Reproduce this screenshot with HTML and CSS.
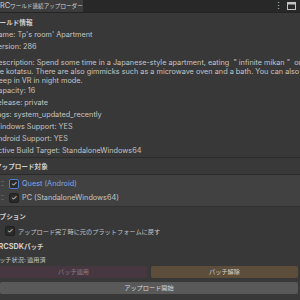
FILE: index.html
```html
<!DOCTYPE html>
<html lang="ja">
<head>
  <meta charset="UTF-8">
  <title>VRCワールド連続アップローダー</title>
  <link rel="stylesheet" href="styles.css">
</head>
<body>
  <div class="tabbar">
    <div class="tab">VRC<span class="ja">ワールド連続アップローダー</span></div>
    <div class="tab-icons">
      <span class="kebab">⋮</span>
      <svg class="win-icon" width="9" height="8" viewBox="0 0 9 8">
        <rect x="0.5" y="0.5" width="8" height="7" fill="none" stroke="#c4c4c4"/>
        <rect x="0.5" y="0.5" width="8" height="2" fill="#c4c4c4"/>
      </svg>
    </div>
  </div>

  <div class="panel">
    <div class="title first"><span class="ja">ワールド情報</span></div>
    <div class="field">Name: Tp's room' Apartment</div>
    <div class="field">Version: 286</div>
    <div class="desc">Description: Spend some time in a Japanese-style apartment, eating &nbsp;" infinite mikan " &nbsp;on<br>the kotatsu. There are also gimmicks such as a microwave oven and a bath. You can also<br>sleep in VR in night mode.</div>
    <div class="field">Capacity: 16</div>
    <div class="field">Release: private</div>
    <div class="field">Tags: system_updated_recently</div>
    <div class="field">Windows Support: YES</div>
    <div class="field">Android Support: YES</div>
    <div class="field">Active Build Target: StandaloneWindows64</div>
  </div>

  <div class="list-box">
    <div class="list-header"><span class="ja">アップロード対象</span></div>
    <div class="list-body">
      <div class="list-row selected">
        <span class="handle"></span>
        <span class="check focus">✓</span>
        <span>Quest (Android)</span>
      </div>
      <div class="list-row">
        <span class="handle"></span>
        <span class="check">✓</span>
        <span>PC (StandaloneWindows64)</span>
      </div>
    </div>
  </div>

  <div class="panel">
    <div class="title options"><span class="ja">オプション</span></div>
    <div class="option-row">
      <span class="check">✓</span>
      <span class="ja">アップロード完了時に元のプラットフォームに戻す</span>
    </div>
    <div class="title sdk">VRCSDK<span class="ja">パッチ</span></div>
    <div class="field status"><span class="ja">パッチ状況: 適用済</span></div>
  </div>

  <div class="buttons">
    <div class="btn btn-apply"><span class="ja">パッチ適用</span></div>
    <div class="btn btn-remove"><span class="ja">パッチ解除</span></div>
  </div>
  <div class="btn btn-upload"><span class="ja">アップロード開始</span></div>
</body>
</html>
```

FILE: styles.css
```css
body {
  margin: 0;
  width: 300px;
  height: 300px;
  overflow: hidden;
  background-color: #383838;
  color: #c4c4c4;
  font-family: Inter, "Noto Sans CJK JP", sans-serif;
  font-size: 7.3px;
}

.ja {
  font-family: "Noto Sans CJK JP", sans-serif;
  font-size: 6.2px;
}

.tabbar {
  display: flex;
  height: 12px;
  background-color: #282828;
  border-bottom: 1px solid #232323;
}

.tab {
  width: 88px;
  margin-left: -5px;
  background-color: #3c3c3c;
  line-height: 12px;
  white-space: nowrap;
  overflow: hidden;
  color: #d0d0d0;
}

.tab .ja {
  font-size: 5.6px;
}

.tab-icons {
  margin-left: auto;
  display: flex;
  align-items: center;
  gap: 4px;
  padding-right: 4px;
}

.kebab {
  font-size: 9px;
  line-height: 12px;
}

.panel {
  margin-left: -7px;
  white-space: nowrap;
}

.title {
  height: 14px;
  line-height: 14px;
  font-weight: bold;
  color: #cfcfcf;
}

.title .ja {
  font-size: 6.6px;
}

.title.first {
  margin-top: 2px;
}

.field {
  height: 12px;
  line-height: 12px;
}

.desc {
  padding: 5px 0 0;
  line-height: 9px;
}

.list-box {
  border-top: 1px solid #2c2c2c;
}

.list-header {
  height: 16px;
  line-height: 16px;
  margin-left: -5px;
  background-color: #393939;
  border-bottom: 1px solid #2a2a2a;
  font-weight: bold;
  color: #cfcfcf;
}

.list-header .ja {
  font-size: 6.6px;
}

.list-body {
  background-color: #414141;
  padding: 2px 0 1px;
  border-bottom: 1px solid #303030;
}

.list-row {
  display: flex;
  align-items: center;
  gap: 3px;
  height: 13px;
  margin-bottom: 1px;
  padding-left: 1px;
}

.list-row.selected {
  color: #7fa6e6;
}

.handle {
  width: 3px;
  height: 3px;
  border-top: 1px solid #5c5c5c;
  border-bottom: 1px solid #5c5c5c;
  margin-right: 2px;
}

.check {
  width: 8px;
  height: 8px;
  line-height: 8px;
  text-align: center;
  font-size: 7px;
  background-color: #2a2a2a;
  border: 1px solid #202020;
  border-radius: 2px;
  color: #e8e8e8;
}

.check.focus {
  border-color: #4c7fd0;
}

.title.options {
  margin-top: 2px;
}

.option-row {
  display: flex;
  align-items: center;
  gap: 3px;
  height: 14px;
  margin-top: 1px;
  padding-left: 12px;
}

.title.sdk {
  margin-top: 1px;
}

.field.status {
  margin-top: 1px;
}

.buttons {
  display: flex;
  gap: 4px;
  padding-right: 2px;
}

.btn {
  height: 12px;
  line-height: 12px;
  text-align: center;
  border-radius: 2px;
}

.btn-apply {
  flex: 1;
  background-color: #473741;
  color: #8d7f88;
}

.btn-remove {
  flex: 1;
  background-color: #5d4d3b;
  color: #d6d0c8;
}

.btn-upload {
  margin: 4px 2px 0 0;
  background-color: #595959;
  color: #d8d8d8;
}
```
